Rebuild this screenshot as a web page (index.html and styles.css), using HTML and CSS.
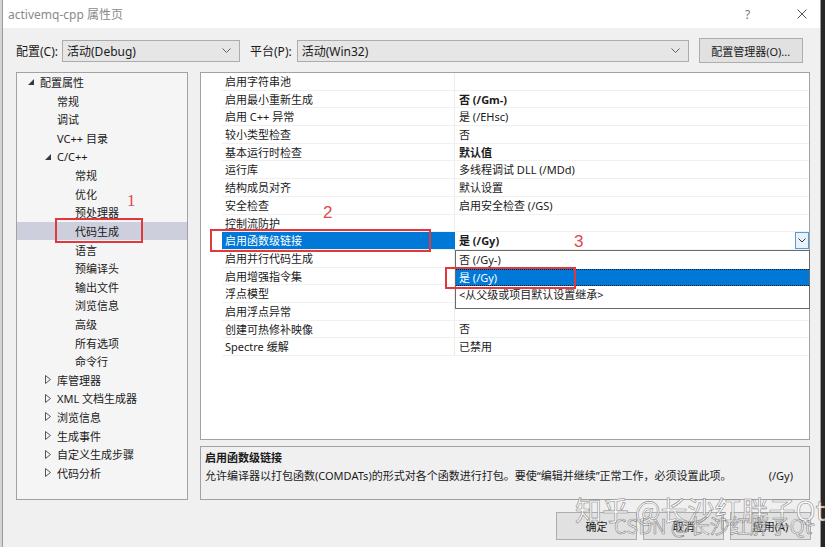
FILE: index.html
```html
<!DOCTYPE html>
<html lang="zh-CN">
<head>
<meta charset="utf-8">
<title>activemq-cpp 属性页</title>
<link rel="stylesheet" href="styles.css">
</head>
<body>
<div class="screen">
  <div class="edge"></div>
  <div class="dialog">
    <div class="titlebar">
      <span class="title">activemq-cpp 属性页</span>
      <span class="help">?</span>
      <svg class="close" width="10" height="10" viewBox="0 0 10 10"><path d="M0.5 0.5L9.5 9.5M9.5 0.5L0.5 9.5" stroke="#555" stroke-width="1" fill="none"/></svg>
    </div>
    <div class="content">
      <div class="config-row">
        <span class="cfg-label">配置(C):</span>
        <div class="select sel-config"><span>活动(Debug)</span><svg class="chev" width="9" height="5" viewBox="0 0 9 5"><path d="M0.5 0.5L4.5 4.5L8.5 0.5" stroke="#606060" fill="none"/></svg></div>
        <span class="cfg-label plat">平台(P):</span>
        <div class="select sel-platform"><span>活动(Win32)</span><svg class="chev" width="9" height="5" viewBox="0 0 9 5"><path d="M0.5 0.5L4.5 4.5L8.5 0.5" stroke="#606060" fill="none"/></svg></div>
        <button class="btn cfg-mgr">配置管理器(O)...</button>
      </div>
      <div class="main">
        <div class="tree">
          <div class="trow l0"><span class="tw"><svg width="6" height="6" viewBox="0 0 6 6"><path d="M6 0L6 6L0 6Z" fill="#3a3a3a"/></svg></span>配置属性</div>
          <div class="trow l1"><span class="tw"></span>常规</div>
          <div class="trow l1"><span class="tw"></span>调试</div>
          <div class="trow l1"><span class="tw"></span>VC++ 目录</div>
          <div class="trow l1"><span class="tw"><svg width="6" height="6" viewBox="0 0 6 6"><path d="M6 0L6 6L0 6Z" fill="#3a3a3a"/></svg></span>C/C++</div>
          <div class="trow l2"><span class="tw"></span>常规</div>
          <div class="trow l2"><span class="tw"></span>优化</div>
          <div class="trow l2"><span class="tw"></span>预处理器</div>
          <div class="trow l2 sel"><span class="tw"></span>代码生成</div>
          <div class="trow l2"><span class="tw"></span>语言</div>
          <div class="trow l2"><span class="tw"></span>预编译头</div>
          <div class="trow l2"><span class="tw"></span>输出文件</div>
          <div class="trow l2"><span class="tw"></span>浏览信息</div>
          <div class="trow l2"><span class="tw"></span>高级</div>
          <div class="trow l2"><span class="tw"></span>所有选项</div>
          <div class="trow l2"><span class="tw"></span>命令行</div>
          <div class="trow l1"><span class="tw"><svg width="6" height="9" viewBox="0 0 6 9"><path d="M0.5 0.5L5.5 4.5L0.5 8.5Z" fill="none" stroke="#555"/></svg></span>库管理器</div>
          <div class="trow l1"><span class="tw"><svg width="6" height="9" viewBox="0 0 6 9"><path d="M0.5 0.5L5.5 4.5L0.5 8.5Z" fill="none" stroke="#555"/></svg></span>XML 文档生成器</div>
          <div class="trow l1"><span class="tw"><svg width="6" height="9" viewBox="0 0 6 9"><path d="M0.5 0.5L5.5 4.5L0.5 8.5Z" fill="none" stroke="#555"/></svg></span>浏览信息</div>
          <div class="trow l1"><span class="tw"><svg width="6" height="9" viewBox="0 0 6 9"><path d="M0.5 0.5L5.5 4.5L0.5 8.5Z" fill="none" stroke="#555"/></svg></span>生成事件</div>
          <div class="trow l1"><span class="tw"><svg width="6" height="9" viewBox="0 0 6 9"><path d="M0.5 0.5L5.5 4.5L0.5 8.5Z" fill="none" stroke="#555"/></svg></span>自定义生成步骤</div>
          <div class="trow l1"><span class="tw"><svg width="6" height="9" viewBox="0 0 6 9"><path d="M0.5 0.5L5.5 4.5L0.5 8.5Z" fill="none" stroke="#555"/></svg></span>代码分析</div>
          <div class="anno-box box1"></div>
          <span class="anno-num num1">1</span>
        </div>
        <div class="right">
          <div class="grid">
            <div class="grow"><span class="gut"></span><span class="name">启用字符串池</span><span class="val"></span></div>
            <div class="grow"><span class="gut"></span><span class="name">启用最小重新生成</span><span class="val b">否 (/Gm-)</span></div>
            <div class="grow"><span class="gut"></span><span class="name">启用 C++ 异常</span><span class="val">是 (/EHsc)</span></div>
            <div class="grow"><span class="gut"></span><span class="name">较小类型检查</span><span class="val">否</span></div>
            <div class="grow"><span class="gut"></span><span class="name">基本运行时检查</span><span class="val b">默认值</span></div>
            <div class="grow"><span class="gut"></span><span class="name">运行库</span><span class="val">多线程调试 DLL (/MDd)</span></div>
            <div class="grow"><span class="gut"></span><span class="name">结构成员对齐</span><span class="val">默认设置</span></div>
            <div class="grow"><span class="gut"></span><span class="name">安全检查</span><span class="val">启用安全检查 (/GS)</span></div>
            <div class="grow"><span class="gut"></span><span class="name">控制流防护</span><span class="val"></span></div>
            <div class="grow active"><span class="gut"></span><span class="name">启用函数级链接</span><span class="val b"><span>是 (/Gy)</span><span class="ddbtn"><svg width="8" height="5" viewBox="0 0 8 5"><path d="M0.5 0.5L4 4L7.5 0.5" stroke="#333" fill="none"/></svg></span></span></div>
            <div class="grow"><span class="gut"></span><span class="name">启用并行代码生成</span><span class="val"></span></div>
            <div class="grow"><span class="gut"></span><span class="name">启用增强指令集</span><span class="val"></span></div>
            <div class="grow"><span class="gut"></span><span class="name">浮点模型</span><span class="val"></span></div>
            <div class="grow"><span class="gut"></span><span class="name">启用浮点异常</span><span class="val"></span></div>
            <div class="grow"><span class="gut"></span><span class="name">创建可热修补映像</span><span class="val">否</span></div>
            <div class="grow"><span class="gut"></span><span class="name">Spectre 缓解</span><span class="val">已禁用</span></div>
            <div class="dropdown">
              <div class="opt">否 (/Gy-)</div>
              <div class="opt chosen">是 (/Gy)</div>
              <div class="opt">&lt;从父级或项目默认设置继承&gt;</div>
            </div>
            <div class="anno-box box2"></div>
            <span class="anno-num num2">2</span>
            <div class="anno-box box3"></div>
            <span class="anno-num num3">3</span>
          </div>
          <div class="desc">
            <div class="desc-title">启用函数级链接</div>
            <div class="desc-text"><span>允许编译器以打包函数(COMDATs)的形式对各个函数进行打包。要使“编辑并继续”正常工作，必须设置此项。</span><span class="desc-code">(/Gy)</span></div>
          </div>
        </div>
      </div>
      <div class="footer">
        <button class="btn act">确定</button>
        <button class="btn act">取消</button>
        <button class="btn act">应用(A)</button>
      </div>
    </div>
  </div>
  <div class="strip"></div>
  <div class="wm wm-zhihu">知乎 @长沙红胖子Qt</div>
  <div class="wm wm-csdn">CSDN @长沙红胖子Qt</div>
</div>
</body>
</html>
```
FILE: styles.css
```css
* { box-sizing: border-box; }
html, body { margin: 0; padding: 0; }
body {
  width: 825px;
  height: 547px;
  overflow: hidden;
  font-family: "Noto Sans", "Noto Sans CJK SC", sans-serif;
  font-size: 11px;
  color: #1a1a1a;
  background: #d8d8d8;
}
.screen {
  position: relative;
  display: flex;
  width: 825px;
  height: 547px;
}
.edge { width: 2px; background: #d4d4d4; }
.dialog {
  width: 819px;
  height: 547px;
  background: #f0f0f0;
  border-left: 1px solid #9a9a9a;
  border-right: 1px solid #9a9a9a;
  display: flex;
  flex-direction: column;
}
.strip { flex: 1; background: #262626; }

.titlebar {
  height: 28px;
  background: #ffffff;
  display: flex;
  align-items: center;
  padding-left: 5px;
  font-size: 12px;
  color: #8a8a8a;
}
.title { flex: 1; }
.help { width: 10px; margin-right: 42px; color: #777; font-size: 12px; }
.close { margin-right: 13px; }

.content {
  padding: 10px 9px 0 13px;
  display: flex;
  flex-direction: column;
}
.config-row {
  height: 25px;
  display: flex;
  align-items: center;
  font-size: 12px;
}
.cfg-label { margin-right: 4px; }
.cfg-label.plat { margin-right: 5px; }
.select {
  height: 22px;
  background: #e6e6e6;
  border: 1px solid #acacac;
  display: flex;
  align-items: center;
  justify-content: space-between;
  padding: 0 8px 0 4px;
}
.sel-config { width: 178px; margin-right: 10px; }
.sel-platform { width: 392px; }
.btn {
  font-family: "Noto Sans", "Noto Sans CJK SC", sans-serif;
  font-size: 11px;
  color: #1a1a1a;
  background: #e1e1e1;
  border: 1px solid #adadad;
  padding: 0;
}
.cfg-mgr { width: 104px; height: 25px; margin-left: 10px; }

.main {
  margin-top: 9px;
  display: flex;
  gap: 12px;
}
.tree {
  position: relative;
  width: 172px;
  height: 428px;
  background: #f5f5f5;
  border: 1px solid #a2a2a2;
}
.trow {
  height: 18.6px;
  display: flex;
  align-items: center;
  white-space: nowrap;
}
.trow.l0 { padding-left: 11px; }
.trow.l1 { padding-left: 28px; }
.trow.l2 { padding-left: 46px; }
.tw { width: 12px; display: flex; align-items: center; }
.trow.sel { background: #cdd0dc; }

.right {
  width: 610px;
  display: flex;
  flex-direction: column;
  gap: 6px;
}
.grid {
  position: relative;
  height: 368px;
  background: #ffffff;
  border: 1px solid #a2a2a2;
}
.grow {
  height: 17.7px;
  display: flex;
  white-space: nowrap;
}
.gut { width: 21px; }
.name {
  width: 233px;
  padding-left: 3px;
  line-height: 17px;
  border-bottom: 1px solid #f0f0f0;
  border-right: 1px solid #ececec;
}
.val {
  flex: 1;
  padding-left: 4px;
  line-height: 17px;
  border-bottom: 1px solid #f0f0f0;
  display: flex;
  justify-content: space-between;
  align-items: center;
}
.val.b { font-weight: bold; }
.grow.active .name { background: #0078d7; color: #fff; border-right-color: #0078d7; }
.ddbtn {
  width: 14px;
  height: 17px;
  border: 1px solid #5b9bd5;
  background: #e8f2fb;
  display: flex;
  align-items: center;
  justify-content: center;
  font-weight: normal;
}
.dropdown {
  position: absolute;
  left: 254px;
  top: 177px;
  width: 355px;
  height: 59px;
  background: #fff;
  border: 1px solid #6a6a6a;
  padding-top: 0;
}
.opt {
  height: 17.7px;
  line-height: 17px;
  padding-left: 3px;
  white-space: nowrap;
}
.opt.chosen {
  background: #0078d7;
  color: #fff;
  border-top: 1px dotted #1a1a1a;
  border-bottom: 1px dotted #1a1a1a;
  line-height: 15px;
}

.anno-box {
  position: absolute;
  border: 2px solid #e0383d;
}
.anno-num {
  position: absolute;
  color: #e0484b;
  font-size: 17px;
  line-height: 17px;
  font-family: "Liberation Sans", sans-serif;
}
.box1 { left: 38px; top: 145px; width: 88px; height: 25px; }
.num1 { left: 110px; top: 119px; font-family: "Liberation Serif", serif; }
.box2 { left: 9px; top: 156px; width: 221px; height: 23px; }
.num2 { left: 122px; top: 131px; }
.box3 { left: 244px; top: 194px; width: 131px; height: 22px; }
.num3 { left: 373px; top: 160px; }

.desc {
  height: 54px;
  border: 1px solid #a2a2a2;
  background: #f0f0f0;
  padding: 2px 0 0 4px;
}
.desc-title { font-weight: bold; line-height: 17px; }
.desc-text {
  display: flex;
  justify-content: space-between;
  line-height: 18px;
  margin-top: 1px;
  white-space: nowrap;
}
.desc-code { padding-right: 16px; }

.footer {
  margin-top: 12px;
  display: flex;
  justify-content: flex-end;
  gap: 6px;
}
.btn.act { width: 81px; height: 28px; }

.wm {
  position: absolute;
  white-space: nowrap;
  pointer-events: none;
  font-family: "Noto Sans CJK SC", sans-serif;
}
.wm-zhihu {
  left: 575px;
  top: 493px;
  font-size: 27px;
  line-height: 34px;
  color: rgba(255, 255, 255, 0.85);
  -webkit-text-stroke: 0.6px rgba(110, 110, 110, 0.8);
}
.wm-csdn {
  left: 614px;
  top: 512px;
  font-size: 20px;
  line-height: 28px;
  color: rgba(255, 255, 255, 0.35);
  -webkit-text-stroke: 0.6px rgba(120, 120, 120, 0.85);
}
```
